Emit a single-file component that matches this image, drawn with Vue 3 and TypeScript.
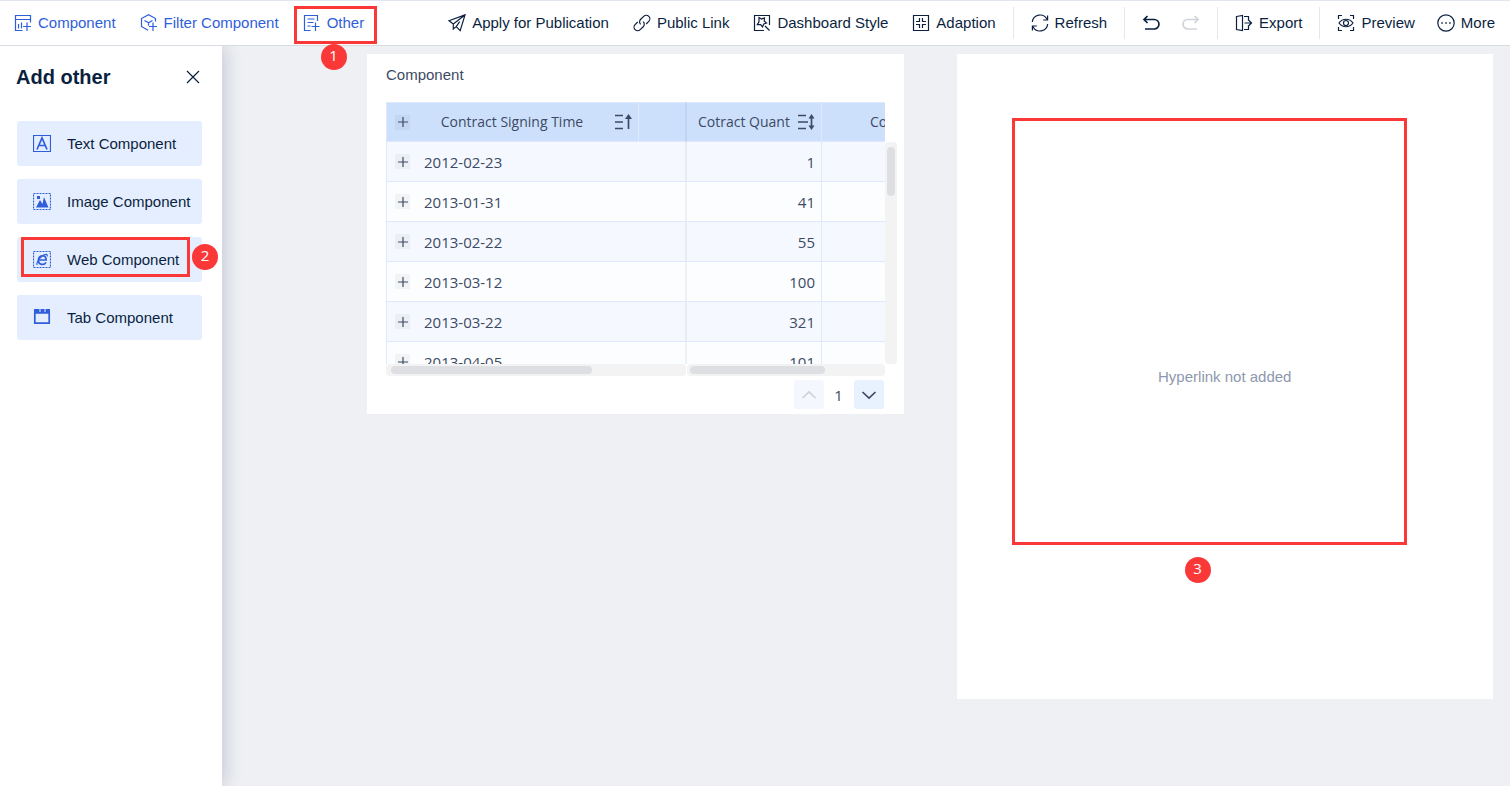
<script setup lang="ts">
import { ref } from 'vue'

interface Shape {
  d: string
  solid?: boolean
  dash?: boolean
  heavy?: boolean
}

const icons: Record<string, Shape[]> = {
  component: [
    { d: 'M1.5 1.5h15v4h-15zM1.5 5.5v11h7M16.5 5.5v3M4.5 10v4.5M7.5 8.5v6M13 8.5v8.5M9 12.5h8' },
  ],
  filter: [
    { d: 'M15.5 7.5v-3L8.5.8 1.5 4.5v8l6.500 3.700M4.500 6.500l4 2.300 4-2.300M8.500 8.800v3M13 8.500v8.500M9 12.500h8' },
  ],
  other: [
    { d: 'M14.5 7V1.5h-13v15h6M4.5 5h7M4.5 8.5h6M4.5 12h3M12.5 8.5v8.5M8.5 12.5h8' },
  ],
  plane: [{ d: 'M17 .9 1 6.700l4.300 3.200L17 .9l-4.800 15.800-4-4.100M5.300 9.900v5.100l2.900-2.400 3.500-5' }],
  link: [
    { d: 'M7.6 10.4a3.6 3.6 0 0 1 .1-5.1l3-3a3.6 3.6 0 0 1 5.1 5.1l-2.6 2.6M10.2 7.6a3.6 3.6 0 0 1 0 5.1l-3 3a3.6 3.6 0 0 1-5.1-5.1l2.6-2.6' },
  ],
  style: [
    { d: 'M11 16.500H1.500v-15h15V11M6 3.500 8.500 5l3-1.200-.3 3.200 2.300 2-2.700 1-1.300 2.800-1.900-2.300-3.300.1L6 7.800zM12 12l4.500 4.500' },
  ],
  adaption: [
    { d: 'M1.5 1.5h15v15h-15zM7.5 4v3.5H4M10.5 4v3.5H14M7.5 14v-3.5H4M10.5 14v-3.5H14' },
  ],
  refresh: [
    { d: 'M1.3 8A7.8 7.8 0 0 1 16 5.3M16.6 1.5V6h-4.4M16.7 10A7.8 7.8 0 0 1 2 12.7M1.4 16.5V12h4.4' },
  ],
  undo: [{ d: 'M5.5 2 2 5.5 5.5 9M2 5.5h10.2a4 4 0 0 1 0 9.5H3', heavy: true }],
  redo: [{ d: 'M12.5 2 16 5.5 12.5 9M16 5.5H5.8a4 4 0 0 0 0 9.5H15', heavy: true }],
  export: [
    { d: 'M1.500 2.500 7.500 1.500v15l-6-1zM9 2.500h4.500v3M9 15.500h4.500v-3M9.500 9h7M13 5.500 16.500 9l-3.500 3.500' },
  ],
  preview: [
    { d: 'M1.500 5V1.500H5M13 1.500h3.500V5M16.500 13v3.500H13M5 16.500H1.500V13M2 9C5.500 4 12.500 4 16 9 12.500 14 5.500 14 2 9zM9 6.500a2.500 2.500 0 1 1 0 5 2.500 2.500 0 0 1 0-5z' },
  ],
  more: [
    { d: 'M9 .8a8.2 8.2 0 1 1 0 16.4A8.2 8.2 0 0 1 9 .8z' },
    { d: 'M4.3 8.3h1.5v1.5H4.3zM8.3 8.3h1.5v1.5H8.3zM12.2 8.3h1.5v1.5h-1.5z', solid: true },
  ],
  text: [
    { d: 'M.5 .5h17v16H.5z' },
    { d: 'M4 14.500 9 3l5 11.500M6 10.500h6', heavy: true },
  ],
  image: [
    { d: 'M.5 .5h17v16H.5z', dash: true },
    { d: 'M3 14.500 7 7l2.400 4L11 4l4.500 10.500zM4 3h3v3H4z', solid: true },
  ],
  web: [
    { d: 'M.5 .5h17v16H.5z', dash: true },
    { d: 'M5.200 9h8c.2-5.700-7.200-5.700-7.800 0-.3 5 5.800 5.700 7.600 2.300', heavy: true },
    { d: 'M4.200 14c-1.400-2.300 3.500-9.500 8.600-10.600 1.500-.2 1.700.9 1.200 2' },
  ],
  tab: [
    { d: 'M1 0h5.500v4H1zM7.500 0h4v3h-4zM12.500 0H17v3h-4.500z', solid: true },
    { d: 'M1.800 3.500v10.700h14.400V3.500M1 3.800h16', heavy: true },
  ],
  close: [{ d: 'M3 3l12 12M15 3 3 15' }],
  plus: [{ d: 'M9 4v10M4 9h10' }],
  up: [{ d: 'M2.500 12 9 6l6.500 6', heavy: true }],
  down: [{ d: 'M2.500 6 9 12l6.500-6', heavy: true }],
  sortAsc: [
    { d: 'M1 2.500h8M1 9h8M1 15.500h8M14.500 5v11', heavy: true },
    { d: 'M14.500 1l3.500 5h-7z', solid: true },
  ],
  sortNone: [
    { d: 'M1 2.500h8M1 9h10M1 15.500h8M14.500 4v10', heavy: true },
    { d: 'M14.500 1l3 4.500h-6zM14.500 17l3-4.500h-6z', solid: true },
  ],
}

const addTools = [
  { label: 'Component', icon: 'component' },
  { label: 'Filter Component', icon: 'filter' },
  { label: 'Other', icon: 'other', step: 1 },
]

interface Tool {
  label: string
  icon: string
  hint?: string
  off?: boolean
}

const toolGroups: Tool[][] = [
  [
    { label: 'Apply for Publication', icon: 'plane' },
    { label: 'Public Link', icon: 'link' },
    { label: 'Dashboard Style', icon: 'style' },
    { label: 'Adaption', icon: 'adaption' },
  ],
  [{ label: 'Refresh', icon: 'refresh' }],
  [
    { label: '', hint: 'Undo', icon: 'undo' },
    { label: '', hint: 'Redo', icon: 'redo', off: true },
  ],
  [{ label: 'Export', icon: 'export' }],
  [
    { label: 'Preview', icon: 'preview' },
    { label: 'More', icon: 'more' },
  ],
]

const panelItems = [
  { label: 'Text Component', icon: 'text' },
  { label: 'Image Component', icon: 'image' },
  { label: 'Web Component', icon: 'web', step: 2 },
  { label: 'Tab Component', icon: 'tab' },
]

const rows = [
  { date: '2012-02-23', quantity: 1 },
  { date: '2013-01-31', quantity: 41 },
  { date: '2013-02-22', quantity: 55 },
  { date: '2013-03-12', quantity: 100 },
  { date: '2013-03-22', quantity: 321 },
  { date: '2013-04-05', quantity: 101 },
]

const panelOpen = ref(true)
</script>

<template>
  <div class="page">
    <header class="toolbar">
      <nav class="tools add">
        <div v-for="tool in addTools" :key="tool.label" class="tool-wrap">
          <button type="button" class="tool" @click="panelOpen = true">
            <svg class="icon" viewBox="0 0 18 18" aria-hidden="true">
              <path v-for="(s, i) in icons[tool.icon]" :key="i" :d="s.d" :class="{ solid: s.solid }" />
            </svg>
            {{ tool.label }}
          </button>
          <template v-if="tool.step">
            <span class="frame frame-tool"></span>
            <span class="badge badge-tool">{{ tool.step }}</span>
          </template>
        </div>
      </nav>
      <div class="actions">
        <div v-for="(group, g) in toolGroups" :key="g" class="tools group">
          <button
            v-for="tool in group"
            :key="tool.icon"
            type="button"
            class="tool"
            :disabled="tool.off"
            :aria-label="tool.label || tool.hint"
          >
            <svg class="icon" viewBox="0 0 18 18" aria-hidden="true">
              <path
                v-for="(s, i) in icons[tool.icon]"
                :key="i"
                :d="s.d"
                :class="{ solid: s.solid, heavy: s.heavy }"
              />
            </svg>
            <template v-if="tool.label">{{ tool.label }}</template>
          </button>
        </div>
      </div>
    </header>

    <div class="workspace">
      <aside v-if="panelOpen" class="panel">
        <div class="panel-head">
          <h2>Add other</h2>
          <button type="button" class="close" aria-label="Close" @click="panelOpen = false">
            <svg class="icon" viewBox="0 0 18 18" aria-hidden="true">
              <path v-for="(s, i) in icons.close" :key="i" :d="s.d" />
            </svg>
          </button>
        </div>
        <div v-for="item in panelItems" :key="item.label" class="entry-wrap">
          <button type="button" class="entry">
            <svg class="icon" viewBox="0 0 18 18" aria-hidden="true">
              <path
                v-for="(s, i) in icons[item.icon]"
                :key="i"
                :d="s.d"
                :class="{ solid: s.solid, dash: s.dash, heavy: s.heavy }"
              />
            </svg>
            {{ item.label }}
          </button>
          <template v-if="item.step">
            <span class="frame frame-entry"></span>
            <span class="badge badge-entry">{{ item.step }}</span>
          </template>
        </div>
      </aside>

      <main class="board">
        <section class="card data-card">
          <h3>Component</h3>
          <div class="grid">
            <div class="viewport">
              <table>
                <colgroup>
                  <col class="c-date" />
                  <col class="c-extra" />
                  <col class="c-quantity" />
                  <col />
                </colgroup>
                <thead>
                  <tr>
                    <th scope="col">
                      <div class="cell">
                        <button type="button" class="expand" aria-label="Expand all">
                          <svg viewBox="0 0 18 18" aria-hidden="true"><path :d="icons.plus[0].d" /></svg>
                        </button>
                        <span class="head-text">Contract Signing Time</span>
                        <button type="button" class="sort" aria-label="Sort by time">
                          <svg class="icon" viewBox="0 0 18 18" aria-hidden="true">
                            <path
                              v-for="(s, i) in icons.sortAsc"
                              :key="i"
                              :d="s.d"
                              :class="{ solid: s.solid, heavy: s.heavy }"
                            />
                          </svg>
                        </button>
                      </div>
                    </th>
                    <td class="frozen-edge"></td>
                    <th scope="col">
                      <div class="cell quantity-head">
                        <span class="head-text">Cotract Quant</span>
                        <button type="button" class="sort" aria-label="Sort by quantity">
                          <svg class="icon" viewBox="0 0 18 18" aria-hidden="true">
                            <path
                              v-for="(s, i) in icons.sortNone"
                              :key="i"
                              :d="s.d"
                              :class="{ solid: s.solid, heavy: s.heavy }"
                            />
                          </svg>
                        </button>
                      </div>
                    </th>
                    <th scope="col" class="next-head">Co</th>
                  </tr>
                </thead>
                <tbody>
                  <tr v-for="row in rows" :key="row.date">
                    <td colspan="2" class="frozen-edge">
                      <div class="cell">
                        <button type="button" class="expand" :aria-label="'Expand ' + row.date">
                          <svg viewBox="0 0 18 18" aria-hidden="true"><path :d="icons.plus[0].d" /></svg>
                        </button>
                        <span class="date">{{ row.date }}</span>
                      </div>
                    </td>
                    <td class="number">{{ row.quantity }}</td>
                    <td></td>
                  </tr>
                </tbody>
              </table>
            </div>
            <div class="track vertical"><div class="thumb"></div></div>
            <div class="tracks">
              <div class="track first"><div class="thumb"></div></div>
              <div class="track second"><div class="thumb"></div></div>
            </div>
          </div>
          <div class="pager">
            <button type="button" disabled aria-label="Previous page">
              <svg class="icon" viewBox="0 0 18 18" aria-hidden="true">
                <path class="heavy" :d="icons.up[0].d" />
              </svg>
            </button>
            <span>1</span>
            <button type="button" aria-label="Next page">
              <svg class="icon" viewBox="0 0 18 18" aria-hidden="true">
                <path class="heavy" :d="icons.down[0].d" />
              </svg>
            </button>
          </div>
        </section>

        <section class="card web-card">
          <p>Hyperlink not added</p>
          <span class="frame frame-web"></span>
          <span class="badge badge-web">3</span>
        </section>
      </main>
    </div>
  </div>
</template>

<style>
body {
  margin: 0;
}
</style>

<style scoped>
* {
  box-sizing: border-box;
}
.page {
  display: flex;
  flex-direction: column;
  min-height: 100vh;
  background: #eff0f4;
  color: #0b1f3f;
  font-family: "Liberation Sans", Arial, sans-serif;
  font-size: 15px;
  line-height: 20px;
}
button {
  display: flex;
  align-items: center;
  border: 0;
  padding: 0;
  background: none;
  color: inherit;
  font: inherit;
  white-space: nowrap;
  cursor: pointer;
}
.icon {
  flex: none;
  width: 18px;
  height: 18px;
}
path {
  fill: none;
  stroke: currentColor;
  stroke-width: 1.2;
}
path.heavy {
  stroke-width: 1.7;
}
path.solid {
  fill: currentColor;
  stroke: none;
}
path.dash {
  stroke-dasharray: 2 1;
}

.toolbar {
  position: relative;
  z-index: 3;
  display: flex;
  justify-content: space-between;
  align-items: center;
  height: 46px;
  padding: 0 15px 0 14px;
  border-top: 1px solid #e1e5f0;
  border-bottom: 1px solid #d8dbe2;
  background: #fff;
}
.tools,
.actions {
  display: flex;
  align-items: center;
}
.tools {
  gap: 24px;
}
.add {
  color: #2f5edb;
}
.tool {
  gap: 6px;
  height: 32px;
}
.tool:disabled {
  color: #d0d3da;
}
.tool-wrap,
.entry-wrap {
  position: relative;
}
.group + .group {
  gap: 22px;
  margin-left: 17px;
  padding-left: 17px;
  border-left: 1px solid #e3e6ef;
}

.frame {
  position: absolute;
  border: 3px solid #fb3838;
  pointer-events: none;
}
.badge {
  position: absolute;
  z-index: 3;
  width: 26px;
  height: 26px;
  border-radius: 50%;
  background: #fb3838;
  color: #fff;
  font-family: "Open Sans", sans-serif;
  font-size: 15px;
  line-height: 22px;
  text-align: center;
}
.frame-tool {
  inset: -1px -13px -5px -9px;
}
.badge-tool {
  top: 37px;
  left: 18px;
}
.frame-entry {
  inset: 0 12px 5px 4px;
}
.badge-entry {
  top: 7px;
  right: -16px;
}
.frame-web {
  top: 64px;
  right: 86px;
  left: 55px;
  height: 427px;
}
.badge-web {
  top: 503px;
  left: 228px;
}

.workspace {
  display: flex;
  flex: 1;
}
.panel {
  z-index: 2;
  display: flex;
  flex: none;
  flex-direction: column;
  gap: 13px;
  width: 222px;
  padding: 16px 20px 16px 17px;
  background: #fff;
  box-shadow: 4px 0 16px rgba(24, 45, 75, 0.18);
}
.panel-head {
  display: flex;
  align-items: center;
  justify-content: space-between;
  margin-bottom: 16px;
  height: 30px;
}
h2 {
  margin: 0 0 0 -1px;
  font-size: 20px;
  line-height: 30px;
}
.entry {
  gap: 16px;
  width: 100%;
  height: 45px;
  padding-left: 16px;
  border-radius: 3px;
  background: #e4eeff;
}
.entry .icon {
  color: #2f5edb;
}

.board {
  display: grid;
  flex: 1;
  grid-template-columns: minmax(0, 1fr) minmax(0, 1fr);
  align-items: start;
  gap: 53px;
  min-width: 0;
  padding: 8px 17px 16px 145px;
}
.card {
  position: relative;
  background: #fff;
}
.data-card {
  padding: 0 7px 5px 19px;
  color: #3d4a63;
}
h3 {
  margin: 0 0 6px;
  font-size: 15px;
  font-weight: 400;
  line-height: 42px;
}
.grid {
  display: grid;
  grid-template-columns: minmax(0, 1fr) 12px;
}
.viewport {
  height: 262px;
  overflow: hidden;
  border-left: 1px solid #deeafb;
}
table {
  width: 100%;
  table-layout: fixed;
  border-collapse: separate;
  border-spacing: 0;
  font-family: "Open Sans", "Noto Sans", sans-serif;
}
.c-date {
  width: 252px;
}
.c-extra {
  width: 48px;
}
.c-quantity {
  width: 135px;
}
th,
td {
  height: 40px;
  padding: 0;
  border-right: 1px solid #deeafb;
  border-bottom: 1px solid #deeafb;
  font-size: 15px;
  font-weight: 400;
  text-align: left;
  white-space: nowrap;
}
thead th,
thead td {
  border-top: 1px solid #deeafb;
  background: #cce0fc;
  font-size: 14px;
}
th:last-child,
td:last-child {
  border-right: 0;
}
tbody tr {
  background: #f5f8fe;
}
tbody tr:nth-child(even) {
  background: #fcfdff;
}
.frozen-edge {
  border-right: 2px solid rgba(40, 70, 110, 0.07);
}
.cell {
  display: flex;
  align-items: center;
  padding-left: 8px;
}
.expand {
  justify-content: center;
  width: 15px;
  height: 15px;
  background: rgba(60, 60, 60, 0.05);
}
.expand svg {
  width: 18px;
  height: 18px;
  flex: none;
}
.date {
  margin-left: 14px;
}
.cell .head-text {
  flex: 1;
  overflow: hidden;
  text-align: center;
}
.sort {
  margin-right: 6px;
}
.quantity-head {
  padding-left: 11px;
}
.quantity-head .head-text {
  text-align: left;
}
.number {
  padding-right: 6px;
  text-align: right;
}
.next-head {
  padding-left: 48px;
  overflow: hidden;
}
.track {
  padding: 2px 5px;
  border-radius: 4px;
  background: #f3f3f3;
}
.thumb {
  height: 8px;
  border-radius: 4px;
  background: #dddfe3;
}
.vertical {
  margin-top: 40px;
  padding: 5px 2px;
}
.vertical .thumb {
  height: 49px;
}
.tracks {
  display: flex;
  gap: 1px;
}
.first {
  width: 300px;
}
.first .thumb {
  width: 201px;
}
.second {
  flex: 1;
  padding-left: 3px;
}
.second .thumb {
  width: 135px;
}
.pager {
  display: flex;
  align-items: center;
  justify-content: flex-end;
  margin-top: 4px;
  padding-right: 13px;
  font-family: "Open Sans", sans-serif;
}
.pager button {
  justify-content: center;
  width: 30px;
  height: 29px;
  border-radius: 3px;
  background: #e8f2ff;
}
.pager button:disabled {
  background: #f4f8fe;
  color: #cdd0d6;
}
.pager span {
  width: 30px;
  text-align: center;
}

.web-card {
  display: flex;
  align-items: center;
  justify-content: center;
  min-height: 645px;
}
.web-card p {
  margin: 0;
  color: #8d98ae;
}
</style>
